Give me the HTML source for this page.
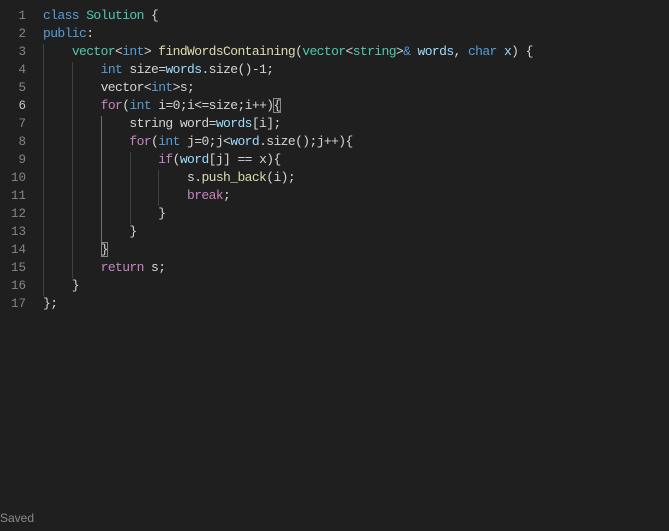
<!DOCTYPE html>
<html><head><meta charset="utf-8"><style>
html,body{margin:0;padding:0;background:#1f1f1f;width:669px;height:531px;overflow:hidden;position:relative}
.code{position:absolute;top:7px;left:0;font-family:"Liberation Mono",monospace;font-size:13px;line-height:18px;color:#d4d4d4}
.code>div{position:relative;height:18px}
.ln{position:absolute;left:0;width:26px;text-align:right;color:#858585;font-size:12.5px}
.ln.cur{color:#c6c6c6}
.t{position:absolute;left:43px;white-space:pre;letter-spacing:-0.6px}
.k{color:#569cd6}.ty{color:#4ec9b0}.f{color:#dcdcaa}.v{color:#9cdcfe}.c{color:#c586c0}
.g{position:absolute;width:1px;background:#404040}
.br{outline:1px solid #888;outline-offset:-1px}
.saved{position:absolute;left:0;top:511px;font-family:"Liberation Sans",sans-serif;font-size:12px;color:#8a8a8a}
</style></head><body>
<div class="g" style="left:43px;top:44px;height:252px"></div>
<div class="g" style="left:72px;top:62px;height:216px"></div>
<div class="g" style="left:101px;top:116px;height:126px;background:#707070"></div>
<div class="g" style="left:130px;top:152px;height:72px"></div>
<div class="g" style="left:158px;top:170px;height:36px"></div>
<div class="code">
<div><span class="ln">1</span><span class="t"><span class="k">class</span> <span class="ty">Solution</span> {</span></div>
<div><span class="ln">2</span><span class="t"><span class="k">public</span>:</span></div>
<div><span class="ln">3</span><span class="t">    <span class="ty">vector</span>&lt;<span class="k">int</span>&gt; <span class="f">findWordsContaining</span>(<span class="ty">vector</span>&lt;<span class="ty">string</span>&gt;<span class="k">&amp;</span> <span class="v">words</span>, <span class="k">char</span> <span class="v">x</span>) {</span></div>
<div><span class="ln">4</span><span class="t">        <span class="k">int</span> size=<span class="v">words</span>.size()-1;</span></div>
<div><span class="ln">5</span><span class="t">        vector&lt;<span class="k">int</span>&gt;s;</span></div>
<div><span class="ln cur">6</span><span class="t">        <span class="c">for</span>(<span class="k">int</span> i=0;i&lt;=size;i++)<span class="br">{</span></span></div>
<div><span class="ln">7</span><span class="t">            string word=<span class="v">words</span>[i];</span></div>
<div><span class="ln">8</span><span class="t">            <span class="c">for</span>(<span class="k">int</span> j=0;j&lt;<span class="v">word</span>.size();j++){</span></div>
<div><span class="ln">9</span><span class="t">                <span class="c">if</span>(<span class="v">word</span>[j] == x){</span></div>
<div><span class="ln">10</span><span class="t">                    s.<span class="f">push_back</span>(i);</span></div>
<div><span class="ln">11</span><span class="t">                    <span class="c">break</span>;</span></div>
<div><span class="ln">12</span><span class="t">                }</span></div>
<div><span class="ln">13</span><span class="t">            }</span></div>
<div><span class="ln">14</span><span class="t">        <span class="br">}</span></span></div>
<div><span class="ln">15</span><span class="t">        <span class="c">return</span> s;</span></div>
<div><span class="ln">16</span><span class="t">    }</span></div>
<div><span class="ln">17</span><span class="t">};</span></div>
</div>
<div class="saved">Saved</div>
</body></html>
